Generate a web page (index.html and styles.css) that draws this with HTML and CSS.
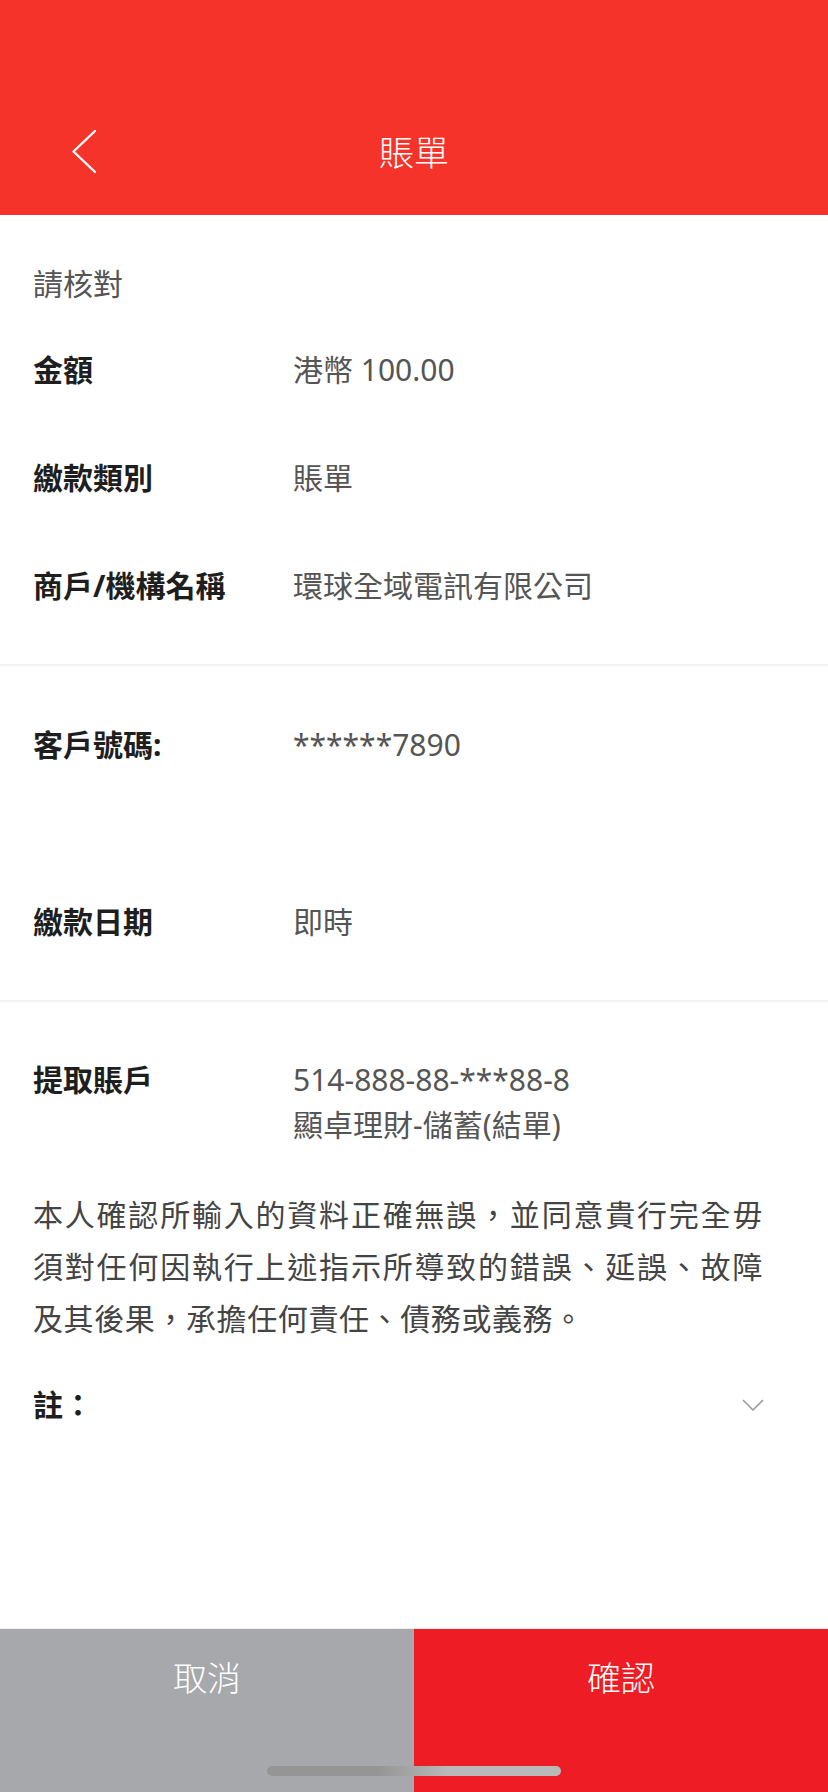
FILE: index.html
```html
<!DOCTYPE html>
<html lang="zh-Hant">
<head>
<meta charset="utf-8">
<title>賬單</title>
<link rel="stylesheet" href="styles.css">
</head>
<body>
<div class="page">
  <header class="topbar">
    <div class="nav">
      <button class="back" aria-label="返回">
        <svg class="back-icon" width="24" height="44" viewBox="0 0 24 44"><path d="M23 2 L1.5 22.5 L23 43" fill="none" stroke="#ffffff" stroke-width="2.4" stroke-linecap="round" stroke-linejoin="round"/></svg>
      </button>
      <h1 class="title">賬單</h1>
      <span class="nav-end"></span>
    </div>
  </header>

  <main class="content">
    <section class="sec sec-first">
      <p class="hint">請核對</p>
      <div class="row"><span class="label">金額</span><span class="value">港幣 100.00</span></div>
      <div class="row"><span class="label">繳款類別</span><span class="value">賬單</span></div>
      <div class="row"><span class="label">商戶/機構名稱</span><span class="value">環球全域電訊有限公司</span></div>
    </section>
    <hr class="divider">
    <section class="sec sec-second">
      <div class="row"><span class="label">客戶號碼:</span><span class="value">******7890</span></div>
      <div class="row-gap"></div>
      <div class="row"><span class="label">繳款日期</span><span class="value">即時</span></div>
    </section>
    <hr class="divider">
    <section class="sec sec-third">
      <div class="row row-multi">
        <span class="label">提取賬戶</span>
        <span class="value">
          <span class="value-line">514-888-88-***88-8</span>
          <span class="value-line">顯卓理財-儲蓄(結單)</span>
        </span>
      </div>
      <p class="notice">本人確認所輸入的資料正確無誤，並同意貴行完全毋須對任何因執行上述指示所導致的錯誤、延誤、故障及其後果，承擔任何責任、債務或義務。</p>
      <div class="note-row">
        <span class="label">註：</span>
        <svg class="chevron" width="24" height="12" viewBox="0 0 24 12"><path d="M2 1 L12 11 L22 1" fill="none" stroke="#9a9a9a" stroke-width="1.6" stroke-linejoin="round"/></svg>
      </div>
    </section>
  </main>

  <footer class="actions">
    <button class="btn btn-cancel">取消</button>
    <button class="btn btn-confirm">確認</button>
    <div class="home-indicator"></div>
  </footer>
</div>
</body>
</html>
```

FILE: styles.css
```css
* {
  box-sizing: border-box;
}

html, body {
  margin: 0;
  padding: 0;
  background: #ffffff;
}

body {
  font-family: "Noto Sans", "Noto Sans CJK TC", sans-serif;
  color: #222222;
}

.page {
  width: 828px;
  min-height: 1792px;
  display: flex;
  flex-direction: column;
}

/* Header */
.topbar {
  background: #f5332a;
  height: 215px;
  padding-top: 107px;
}

.nav {
  height: 88px;
  display: grid;
  grid-template-columns: 1fr auto 1fr;
  align-items: center;
}

.back {
  justify-self: start;
  margin-left: 72px;
  padding: 0;
  border: 0;
  background: transparent;
  display: flex;
  align-items: center;
  height: 44px;
}

.back-icon {
  display: block;
}

.title {
  margin: 0;
  font-family: "Noto Sans CJK TC", sans-serif;
  font-weight: 300;
  font-size: 35px;
  line-height: 44px;
  color: #ffffff;
}

/* Content */
.content {
  flex: 1;
  display: flex;
  flex-direction: column;
}

.sec {
  padding-left: 33px;
  padding-right: 65px;
}

.sec-first {
  padding-top: 47px;
  padding-bottom: 24px;
}

.sec-second {
  padding-top: 25px;
  padding-bottom: 24px;
}

.sec-third {
  padding-top: 55px;
}

.hint {
  margin: 0 0 14px;
  font-family: "Noto Sans CJK TC", sans-serif;
  font-size: 30px;
  line-height: 40px;
  color: #555555;
}

.row {
  display: grid;
  grid-template-columns: 260px 1fr;
  align-items: center;
  height: 108px;
  line-height: 40px;
}

.row-gap {
  height: 69px;
}

.label {
  font-family: "Noto Sans", "Noto Sans CJK TC", sans-serif;
  font-weight: 700;
  font-size: 30px;
  color: #1e1e1e;
}

.value {
  font-family: "Noto Sans", "Noto Sans CJK TC", sans-serif;
  font-weight: 400;
  font-size: 30px;
  color: #555555;
}

.row-multi {
  height: auto;
  align-items: start;
  line-height: 45px;
}

.value-line {
  display: block;
}

.notice {
  margin: 40px 0 0;
  font-family: "Noto Sans CJK TC", sans-serif;
  font-size: 30px;
  line-height: 52px;
  letter-spacing: 0.6px;
  text-align: justify;
  color: #444444;
}

.note-row {
  margin-top: 42px;
  margin-right: -2px;
  height: 40px;
  line-height: 40px;
  display: flex;
  align-items: center;
  justify-content: space-between;
}

.chevron {
  display: block;
}

.divider {
  margin: 0;
  border: 0;
  height: 2px;
  background: #f1f1f1;
}

/* Footer actions */
.actions {
  position: relative;
  height: 164px;
  display: grid;
  grid-template-columns: 1fr 1fr;
  border-top: 1px solid #eeeeee;
}

.btn {
  border: 0;
  margin: 0;
  padding: 28px 0 0;
  display: flex;
  justify-content: center;
  align-items: flex-start;
  font-family: "Noto Sans CJK TC", sans-serif;
  font-weight: 300;
  font-size: 34px;
  line-height: 40px;
  color: #ffffff;
}

.btn-cancel {
  background: #a7a8ab;
}

.btn-confirm {
  background: #ee1c24;
}

.home-indicator {
  position: absolute;
  left: 267px;
  bottom: 16px;
  width: 294px;
  height: 10px;
  border-radius: 5px;
  background: linear-gradient(90deg, #959595 0%, #959595 38%, #b9b9b9 62%, #b9b9b9 100%);
}
```
